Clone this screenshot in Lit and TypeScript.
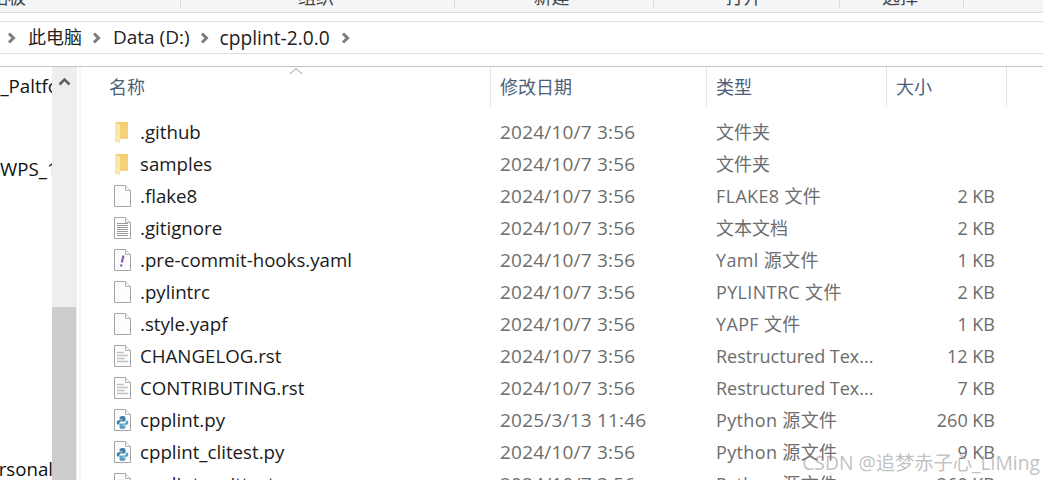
import { LitElement, html, css, svg } from "lit";
import { customElement } from "lit/decorators.js";

type Icon = "folder" | "blank" | "lines" | "yaml" | "doc" | "py";
const rows: [Icon, string, string, string, string][] = [
  ["folder", ".github", "2024/10/7 3:56", "文件夹", ""],
  ["folder", "samples", "2024/10/7 3:56", "文件夹", ""],
  ["blank", ".flake8", "2024/10/7 3:56", "FLAKE8 文件", "2 KB"],
  ["lines", ".gitignore", "2024/10/7 3:56", "文本文档", "2 KB"],
  ["yaml", ".pre-commit-hooks.yaml", "2024/10/7 3:56", "Yaml 源文件", "1 KB"],
  ["blank", ".pylintrc", "2024/10/7 3:56", "PYLINTRC 文件", "2 KB"],
  ["blank", ".style.yapf", "2024/10/7 3:56", "YAPF 文件", "1 KB"],
  ["doc", "CHANGELOG.rst", "2024/10/7 3:56", "Restructured Tex...", "12 KB"],
  ["doc", "CONTRIBUTING.rst", "2024/10/7 3:56", "Restructured Tex...", "7 KB"],
  ["py", "cpplint.py", "2025/3/13 11:46", "Python 源文件", "260 KB"],
  ["py", "cpplint_clitest.py", "2024/10/7 3:56", "Python 源文件", "9 KB"],
  ["doc", "cpplint_unittest.py", "2024/10/7 3:56", "Python 源文件", "260 KB"],
];

const sheet = svg`<path d="M1.5 .5H12.5L17.5 5.5V21.5H1.5Z" fill="#fdfdfd" stroke="#a4a4a4"/><path d="M12.5 .5V5.5H17.5" fill="#efefef" stroke="#b8b8b8"/>`;

function icon(k: Icon) {
  if (k === "folder")
    return html`<svg class="ico" width="19" height="24" viewBox="0 0 19 24">
      <path d="M2 2H15V19H6L2 22Z" fill="#f3cd6c"/>
      <path d="M2 2L7 4.5V23.5L2 21Z" fill="#fce8a6"/>
      <path d="M7 4.5H15V19H7Z" fill="#f5d27a"/>
    </svg>`;
  let extra = svg``;
  if (k === "lines") {
    extra = svg`<path d="M4 6.5H15M4 8.5H15M4 10.5H15M4 12.5H15M4 14.5H15M4 16.5H15M4 18.5H15" stroke="#9a9a9a" stroke-width="1"/>`;
  } else if (k === "doc") {
    extra = svg`<path d="M4 7.5H11M4 10.5H15M4 13.5H12M4 16.5H15" stroke="#c2c2c2" stroke-width="1.4"/>`;
  } else if (k === "yaml") {
    extra = svg`<path d="M10.5 6.5L8.8 13.5" stroke="#8a5bb0" stroke-width="2.2"/><circle cx="8.2" cy="16.5" r="1.2" fill="#8a5bb0"/>`;
  } else if (k === "py") {
    extra = svg`<path d="M9.5 7C6.8 7 6.5 8 6.5 9.5V10.5H9.5V11.2H5.5C4.2 11.2 3.7 12.3 3.7 13.4C3.7 14.6 4.3 15.5 5.5 15.5H6.5V14C6.5 13 7.3 12.5 8.3 12.5H10.8C11.8 12.5 12.5 11.8 12.5 11V9C12.5 7.6 11.2 7 9.5 7Z" fill="#3d7fa8"/>
      <path d="M9.5 20C12.2 20 12.5 19 12.5 17.5V16.5H9.5V15.8H13.5C14.8 15.8 15.3 14.7 15.3 13.6C15.3 12.4 14.7 11.5 13.5 11.5H12.8V13C12.8 14 12 14.5 11 14.5H8.2C7.2 14.5 6.5 15.2 6.5 16V18C6.5 19.4 7.8 20 9.5 20Z" fill="#5aa0bd"/>`;
  }
  return html`<svg class="ico" width="19" height="24" viewBox="0 0 19 24"><g transform="translate(0 1)">${sheet}${extra}</g></svg>`;
}

const chev = html`<svg class="crumb" width="11" height="14" viewBox="0 0 11 14"><path d="M3 2.5L7.5 7L3 11.5" fill="none" stroke="#7d7d7d" stroke-width="3"/></svg>`;

@customElement("app-root")
export class AppRoot extends LitElement {
  static styles = css`
    :host { display: block; width: 1043px; height: 480px; overflow: hidden; background: #fff; position: relative;
      font-family: "Open Sans", "Noto Sans CJK SC", sans-serif; font-size: 18px; color: #1a1a1a; }
    .ribbon { height: 12px; background: #f4f5f7; border-bottom: 1px solid #dcdcdc; display: flex; overflow: hidden; color: #444; font-size: 18px; font-family: "Noto Sans CJK SC", sans-serif; }
    .grp { height: 9px; border-right: 1px solid #dadbdd; display: flex; align-items: flex-end; justify-content: center; overflow: hidden; box-sizing: border-box; flex: none; }
    .grp span { line-height: 20px; margin-bottom: 3px; flex: none; }
    .g1 { width: 181px; justify-content: flex-start; } .g1 span { margin-left: -28px; }
    .g2 { width: 274px; } .g2 span { margin-left: -3px; }
    .g3 { width: 199px; } .g3 span { margin-left: -5px; }
    .g4 { width: 186px; } .g4 span { margin-left: -6px; }
    .g5 { width: 124px; } .g5 span { margin-left: -3px; }
    .addr { margin-top: 8px; height: 31px; border-top: 1px solid #dfdfdf; border-bottom: 1px solid #dfdfdf; display: flex; align-items: center; padding-left: 6px; }
    .addr span { line-height: 31px; color: #222; }
    .crumb { flex: none; }
    .a1 { margin: 0 9px 0 11px; } .a2 { margin: 0 9px 0 11px; font-size: 19px; } .a3 { margin: 0 10px 0 10px; font-size: 19.2px; }
    .main { margin-top: 12px; border-top: 1px solid #c4c4c4; display: flex; height: 414px; }
    .side { width: 52px; flex: none; overflow: hidden; white-space: nowrap; padding-top: 5px; color: #111; font-size: 18.7px; }
    .side div { line-height: 27px; }
    .s1 { text-indent: -10px; } .s2 { margin-top: 56px; } .s3 { margin-top: 273px; text-indent: -23px; }
    .sb { width: 25px; flex: none; background: #eeeeee; display: flex; flex-direction: column; align-items: center; }
    .up { margin: 10px 0 0; flex: none; }
    .thumb { margin-top: 221px; width: 24px; align-self: flex-start; flex: 1; background: #cdcdcd; }
    .gapline { width: 2px; margin-left: 2px; background: #f5f5f5; flex: none; }
    .list { flex: 1; position: relative; min-width: 0; }
    .head, .row { display: grid; grid-template-columns: 391px 216px 180px 120px; }
    .head { height: 40px; padding-left: 19px; color: #4c607a; font-family: "Noto Sans CJK SC", sans-serif; font-size: 18px; }
    .head div { border-right: 1px solid #e5e5e5; line-height: 39px; padding-left: 9px; box-sizing: border-box; }
    .sort { position: absolute; left: 208px; top: 0; }
    .rows { margin-top: 9px; }
    .row { height: 32px; line-height: 32px; padding-left: 19px; white-space: nowrap; }
    .n { display: flex; align-items: center; padding-left: 13px; color: #1a1a1a; font-size: 18.7px; }
    .ico { flex: none; margin-right: 8px; }
    .d, .t, .z { color: #6d6d6d; }
    .d { padding-left: 9px; font-size: 19px; letter-spacing: .2px; }
    .t { padding-left: 9px; } .t.mix { letter-spacing: .35px; }
    .z { text-align: right; padding-right: 12px; }
    .mark { position: absolute; right: 3px; bottom: 5px; color: rgba(140,140,140,.55); font-size: 19.3px; line-height: 24px; white-space: nowrap; }
  `;
  render() {
    return html`
      <div class="ribbon">
        <div class="grp g1"><span>剪贴板</span></div>
        <div class="grp g2"><span>组织</span></div>
        <div class="grp g3"><span>新建</span></div>
        <div class="grp g4"><span>打开</span></div>
        <div class="grp g5"><span>选择</span></div>
      </div>
      <div class="addr">
        ${chev}<span class="a1">此电脑</span>${chev}<span class="a2">Data (D:)</span>${chev}<span class="a3">cpplint-2.0.0</span>${chev}
      </div>
      <div class="main">
        <div class="side">
          <div class="s1">a_Paltform</div>
          <div class="s2">WPS_1</div>
          <div class="s3">Personal</div>
        </div>
        <div class="sb">
          <svg class="up" width="13" height="9" viewBox="0 0 13 9"><path d="M1.5 7.5L6.5 2.5L11.5 7.5" fill="none" stroke="#606060" stroke-width="2.6"/></svg>
          <div class="thumb"></div>
        </div>
        <div class="gapline"></div>
        <div class="list">
          <svg class="sort" width="14" height="8" viewBox="0 0 14 8"><path d="M1 7L7 1.5L13 7" fill="none" stroke="#9a9a9a" stroke-width="1"/></svg>
          <div class="head"><div>名称</div><div>修改日期</div><div>类型</div><div>大小</div></div>
          <div class="rows">
            ${rows.map(([k, n, d, t, z]) => html`<div class="row">
              <div class="n">${icon(k)}<span>${n}</span></div><div class="d">${d}</div><div class="t ${t.includes(" 文") || t.includes(" 源") ? "mix" : ""}">${t}</div><div class="z">${z}</div>
            </div>`)}
          </div>
        </div>
      </div>
      <div class="mark">CSDN @追梦赤子心_LiMing</div>
    `;
  }
}
